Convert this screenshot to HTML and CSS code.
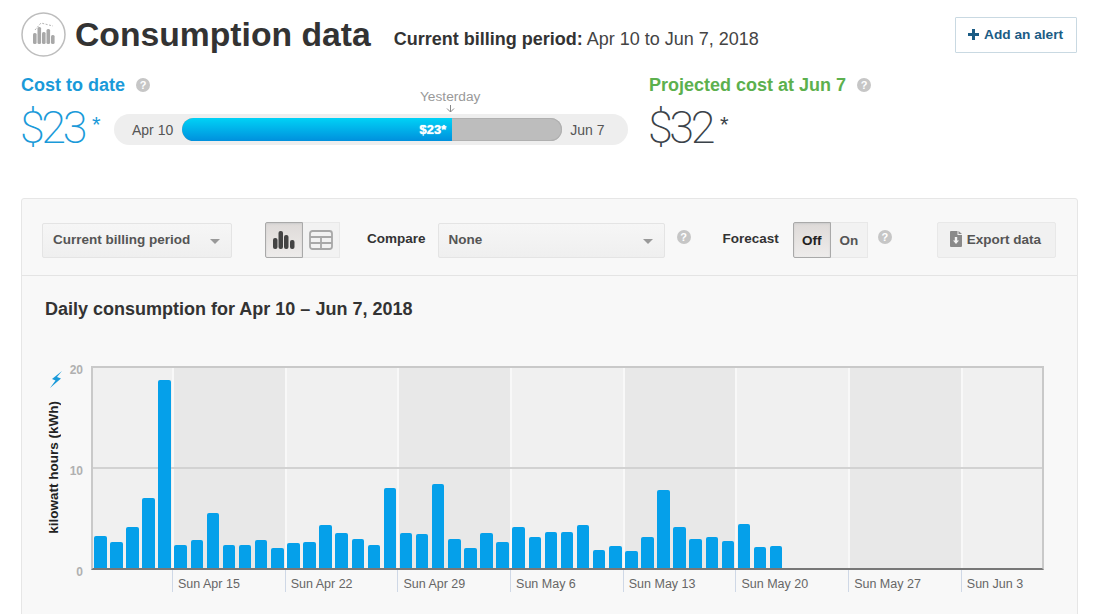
FILE: index.html
```html
<!DOCTYPE html>
<html lang="en">
<head>
<meta charset="utf-8">
<title>Consumption data</title>
<link rel="stylesheet" href="styles.css">
</head>
<body>
<div class="page">
  <header class="header">
    <span class="logo">
      <svg width="45" height="45" viewBox="0 0 45 45">
        <circle cx="22.5" cy="22.5" r="21.5" fill="#fff" stroke="#bdbdbd" stroke-width="1.5"/>
        <g fill="#a8a8a8">
          <rect x="12" y="21" width="3.6" height="11" rx="1.5"/>
          <rect x="16.5" y="15" width="3.6" height="17" rx="1.5"/>
          <rect x="21" y="20" width="3.6" height="12" rx="1.5"/>
          <rect x="25.5" y="17" width="3.6" height="15" rx="1.5"/>
          <rect x="30" y="23" width="3.6" height="9" rx="1.5"/>
        </g>
        <path d="M14 18l6-7 12 3" fill="none" stroke="#b5b5b5" stroke-width="1" stroke-dasharray="2 1.5"/>
      </svg>
    </span>
    <h1 class="title">Consumption data</h1>
    <p class="period"><b>Current billing period:</b> Apr 10 to Jun 7, 2018</p>
    <button class="alert-btn">
      <svg width="11" height="11" viewBox="0 0 11 11"><path d="M4 0h3v4h4v3H7v4H4V7H0V4h4z" fill="#1b5c85"/></svg>
      Add an alert
    </button>
  </header>

  <section class="stats">
    <div class="stat stat-cost">
      <div class="stat-label cost-label">Cost to date <span class="help">?</span></div>
      <div class="stat-value cost-value">$23<sup>*</sup></div>
    </div>
    <div class="pill">
      <span class="yesterday">Yesterday
        <svg class="yarrow" width="9" height="8" viewBox="0 0 9 8"><path d="M4.5 0v7M1 3.5l3.5 3.5L8 3.5" fill="none" stroke="#888" stroke-width="1"/></svg>
      </span>
      <span class="pill-date">Apr 10</span>
      <div class="track">
        <div class="fill">$23*</div>
      </div>
      <span class="pill-date">Jun 7</span>
    </div>
    <div class="stat stat-proj">
      <div class="stat-label proj-label">Projected cost at Jun 7 <span class="help">?</span></div>
      <div class="stat-value proj-value">$32<sup>*</sup></div>
    </div>
  </section>

  <section class="panel">
    <div class="toolbar">
      <div class="select select-period">Current billing period<i class="caret"></i></div>
      <div class="toggle toggle-view">
        <span class="tg active">
          <svg width="22" height="18" viewBox="0 0 22 18" fill="#444"><rect x="0" y="7" width="4.500" height="11" rx="2"/><rect x="5.500" y="0" width="4.500" height="18" rx="2"/><rect x="11" y="4" width="4.500" height="14" rx="2"/><rect x="17" y="9" width="4.500" height="9" rx="2"/></svg>
        </span>
        <span class="tg">
          <svg width="24" height="20" viewBox="0 0 24 20" fill="none" stroke="#a8a8a8" stroke-width="1.800"><rect x="1" y="1" width="22" height="18" rx="2.500"/><path d="M1 7h22M1 13h22M12 7v12"/></svg>
        </span>
      </div>
      <span class="tb-label compare-label">Compare</span>
      <div class="select select-compare">None<i class="caret"></i></div>
      <span class="help help-compare">?</span>
      <span class="tb-label forecast-label">Forecast</span>
      <div class="toggle toggle-forecast">
        <span class="tg active">Off</span>
        <span class="tg">On</span>
      </div>
      <span class="help help-forecast">?</span>
      <button class="export-btn">
        <svg width="12" height="16" viewBox="0 0 12 16"><path d="M1 0h6.500v4H12v11a1 1 0 0 1-1 1H1a1 1 0 0 1-1-1V1a1 1 0 0 1 1-1zM8.500 0L12 3H8.500z" fill="#8a8a8a"/><path d="M4.800 6h2.400v3.500H9L6 13 3 9.500h1.800z" fill="#f4f4f4"/></svg>
        Export data
      </button>
    </div>

    <h2 class="chart-title">Daily consumption for Apr 10 – Jun 7, 2018</h2>

    <div class="chart">
      <div class="y-title">
        <svg class="bolt" width="14" height="17" viewBox="0 0 14 17"><path d="M13 0L3 8l3.500 1.500L1 17l11-9.500L8 6z" fill="#1a9ad9"/></svg>
        <span class="y-text">kilowatt hours (kWh)</span>
      </div>
      <div class="y-labels"><span>20</span><span>10</span><span>0</span></div>
      <div class="plot-col">
        <div class="plot">
          <div class="bands">
            <i></i><i class="dark"></i><i></i><i class="dark"></i><i></i><i class="dark"></i><i></i><i class="dark"></i><i></i>
          </div>
          <div class="gridline"></div>
          <div class="bars">
            <b style="height:32px"></b><b style="height:26px"></b><b style="height:41px"></b><b style="height:70px"></b><b style="height:188px"></b><b style="height:23px"></b><b style="height:28px"></b><b style="height:55px"></b><b style="height:23px"></b><b style="height:23px"></b><b style="height:28px"></b><b style="height:20px"></b><b style="height:25px"></b><b style="height:26px"></b><b style="height:43px"></b><b style="height:35px"></b><b style="height:29px"></b><b style="height:23px"></b><b style="height:80px"></b><b style="height:35px"></b><b style="height:34px"></b><b style="height:84px"></b><b style="height:29px"></b><b style="height:20px"></b><b style="height:35px"></b><b style="height:26px"></b><b style="height:41px"></b><b style="height:31px"></b><b style="height:36px"></b><b style="height:36px"></b><b style="height:43px"></b><b style="height:18px"></b><b style="height:22px"></b><b style="height:17px"></b><b style="height:31px"></b><b style="height:78px"></b><b style="height:41px"></b><b style="height:29px"></b><b style="height:31px"></b><b style="height:27px"></b><b style="height:44px"></b><b style="height:21px"></b><b style="height:22px"></b>
          </div>
        </div>
        <div class="ticks">
          <span class="tick-blank"></span>
          <span class="tick">Sun Apr 15</span>
          <span class="tick">Sun Apr 22</span>
          <span class="tick">Sun Apr 29</span>
          <span class="tick">Sun May 6</span>
          <span class="tick">Sun May 13</span>
          <span class="tick">Sun May 20</span>
          <span class="tick">Sun May 27</span>
          <span class="tick">Sun Jun 3</span>
        </div>
      </div>
    </div>
  </section>
</div>
</body>
</html>
```
FILE: styles.css
```css
* { box-sizing: border-box; }
html, body { margin: 0; padding: 0; height: 100%; overflow: hidden; background: #fff; }
body { font-family: "Liberation Sans", Arial, sans-serif; color: #333; }
.page { padding: 12px 22px 0 21px; }

.header { display: flex; align-items: flex-start; height: 45px; }
.logo { width: 45px; height: 45px; flex: none; }
.logo svg { display: block; }
.title { margin: 0 0 0 9px; font-size: 33.700px; line-height: 45px; font-weight: 700; color: #333; white-space: nowrap; }
.period { margin: 0 0 0 23px; font-size: 18px; line-height: 55px; color: #444; white-space: nowrap; }
.period b { color: #333; }
.alert-btn {
  margin: 5px 1px 0 auto; width: 122px; height: 36px; display: flex; align-items: center; gap: 5px;
  padding: 0 0 2px 12px; background: #fff; border: 1px solid #c9d9e2; border-radius: 1px;
  font: 700 13.700px "Liberation Sans", Arial, sans-serif; color: #1b5c85;
}

.stats { display: flex; align-items: flex-start; margin-top: 16px; height: 125px; }
.stat { flex: none; }
.stat-cost { width: 93px; }
.stat-proj { margin-left: 21px; }
.stat-label { font-size: 18px; line-height: 24px; font-weight: 700; white-space: nowrap; display: flex; align-items: center; gap: 11px; }
.cost-label { color: #1a9ad9; }
.proj-label { color: #5cb04e; }
.stat-value { font-family: Roboto, sans-serif; font-weight: 200; font-size: 45px; line-height: 50px; letter-spacing: -3.400px; margin: 6px 0 0 -1px; white-space: nowrap; }
.stat-value sup { font-family: "Liberation Sans", sans-serif; font-size: 22px; letter-spacing: 0; line-height: 0; vertical-align: 11px; margin-left: 8px; font-weight: 400; }
.cost-value { color: #1a9ad9; }
.proj-value { color: #3a4249; }

.help { display: inline-block; flex: none; width: 14px; height: 14px; border-radius: 50%; background: #c6c6c6; color: #fff; font: 700 11px/14px "Liberation Sans", sans-serif; text-align: center; }

.pill { position: relative; flex: none; width: 514px; height: 31px; margin-top: 41px; border-radius: 16px; background: #eee; display: flex; align-items: center; padding: 0 25px 0 18px; font-size: 14px; color: #555; }
.pill-date { flex: none; white-space: nowrap; }
.track { flex: none; width: 380px; height: 23px; margin: 0 8px 0 9px; border-radius: 12px; background: #bdbdbd; box-shadow: inset 0 0 0 1px #b0b0b0; overflow: hidden; }
.fill { width: 270px; height: 23px; border-radius: 12px 0 0 12px; background: linear-gradient(#00d2f6, #0090dd); color: #fff; font-size: 13px; font-weight: 700; line-height: 23px; text-align: right; padding-right: 6px; text-shadow: 0 0 1px #fff; }
.yesterday { position: absolute; left: 306px; top: -25px; color: #999; font-size: 13.700px; line-height: 16px; white-space: nowrap; display: block; }
.yarrow { position: absolute; left: 26px; top: 16px; }

.panel { width: 1057px; height: 420px; background: #f8f8f8; border: 1px solid #e6e6e6; border-radius: 3px; }
.toolbar { height: 77px; border-bottom: 1px solid #e4e4e4; display: flex; align-items: flex-start; padding: 23px 0 0 20px; }
.select { position: relative; height: 35px; margin-top: 1px; background: linear-gradient(#f6f6f6, #efefef); border: 1px solid #e4e4e4; border-radius: 2px; font-size: 13.500px; font-weight: 700; line-height: 32px; color: #555; padding-left: 10px; white-space: nowrap; flex: none; }
.select-period { width: 190px; }
.select-compare { width: 227px; margin-left: 12px; }
.caret { position: absolute; right: 11px; top: 15px; width: 0; height: 0; border: 5px solid transparent; border-top-color: #999; border-bottom: 0; }
.toggle { display: flex; height: 37px; flex: none; }
.toggle-view { margin-left: 33px; }
.tg { width: 37px; height: 36px; display: flex; align-items: center; justify-content: center; background: #f2f2f2; border: 1px solid #e8e8e8; border-left: 0; font-size: 13.500px; font-weight: 700; color: #555; }
.tg.active { width: 38px; background: linear-gradient(#dedad8, #eeeceb); border: 1px solid #a9a9a9; border-radius: 2px 0 0 2px; box-shadow: inset 0 1px 2px #ccc; color: #222; }
.tb-label { font-size: 13.500px; font-weight: 700; color: #333; line-height: 34px; white-space: nowrap; }
.compare-label { margin-left: 27px; }
.help-compare { margin: 8px 0 0 12px; }
.forecast-label { margin-left: 32px; }
.toggle-forecast { margin-left: 14px; }
.help-forecast { margin: 8px 0 0 10px; }
.export-btn { margin-left: 45px; width: 119px; height: 36px; display: flex; align-items: center; gap: 5px; padding: 0 0 2px 12px; background: #f1f1f1; border: 1px solid #e8e8e8; border-radius: 2px; font: 700 13.500px "Liberation Sans", Arial, sans-serif; color: #555; white-space: nowrap; }

.chart-title { margin: 21px 0 0 23px; font-size: 18px; line-height: 24px; font-weight: 700; color: #333; }

.chart { display: flex; align-items: flex-start; margin: 45px 0 0 24px; }
.y-title { width: 16px; flex: none; height: 170px; margin-top: 5px; display: flex; flex-direction: column; align-items: center; gap: 13px; }
.bolt { flex: none; margin-left: 3px; }
.y-text { writing-mode: vertical-rl; transform: rotate(180deg); font-size: 13.500px; font-weight: 700; color: #222; line-height: 14px; white-space: nowrap; }
.y-labels { flex: none; width: 21px; height: 216px; margin: -3px 8px 0 0; display: flex; flex-direction: column; justify-content: space-between; align-items: flex-end; font-size: 12px; line-height: 14px; color: #b0b0b0; font-weight: 700; }

.plot-col { flex: none; width: 953px; }
.plot { position: relative; height: 204px; border: solid #c9c9c9; border-width: 2px 2px 0 2px; border-bottom: 2px solid #777; }
.bands { position: absolute; inset: 0; display: grid; grid-template-columns: 79px repeat(7, 112.700px) 1fr; }
.bands i { background: #f0f0f0; border-left: 2px solid #f8f8f8; }
.bands i:first-child { border-left: 0; }
.bands i.dark { background: #e8e8e8; }
.gridline { position: absolute; left: 0; right: 0; top: 99px; height: 2px; background: #d2d2d2; }
.bars { position: absolute; inset: 0 0 0 1px; display: flex; align-items: flex-end; gap: 3.600px; }
.bars b { flex: none; width: 12.500px; background: #05a0ea; border-radius: 2px 2px 0 0; }

.ticks { display: grid; grid-template-columns: 81px repeat(7, 112.700px) 1fr; }
.tick { height: 22px; border-left: 1px solid #cfd8e6; padding: 7px 0 0 5px; font-size: 12.500px; line-height: 14px; color: #666; white-space: nowrap; }
```
